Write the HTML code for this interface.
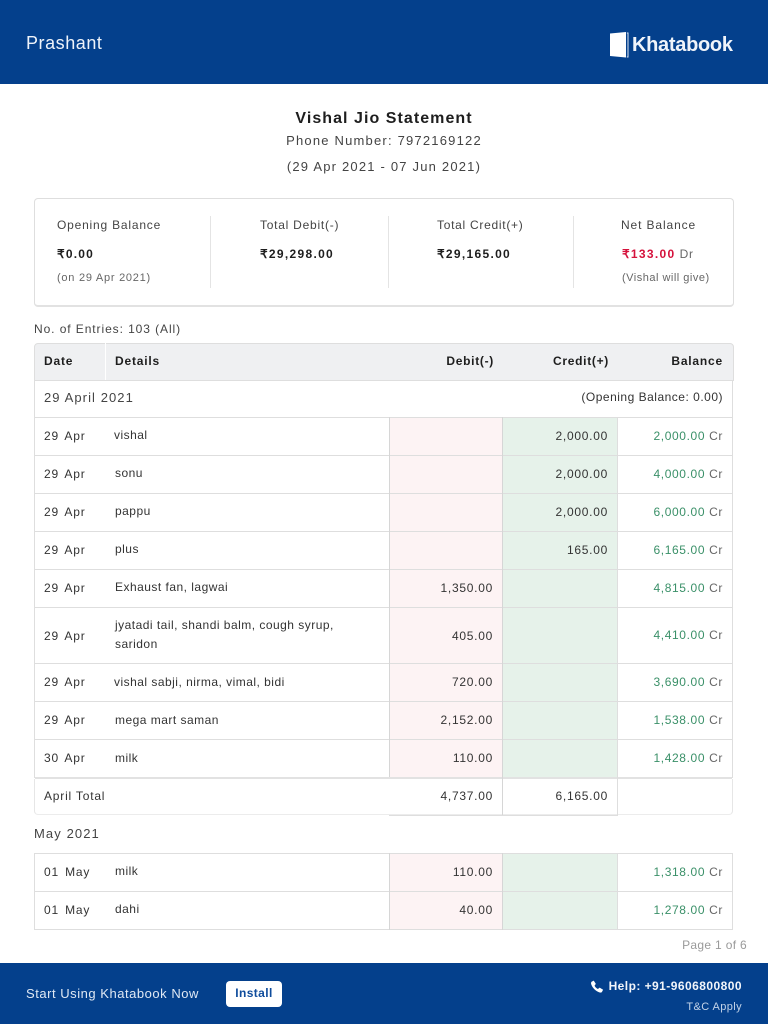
<!DOCTYPE html>
<html><head><meta charset="utf-8">
<style>
html,body{margin:0;padding:0;background:#fff}
#p{position:relative;width:768px;height:1024px;overflow:hidden;background:#fff;font-family:"Liberation Sans",sans-serif;color:#333;font-size:12px;letter-spacing:.8px}
.t,.r,.c{position:absolute;white-space:nowrap;line-height:16px}
.r{text-align:right}
.c{text-align:center}
.b{position:absolute;background:#dedede}
.d{background:#fdf3f4;position:absolute;left:390px;width:112px}
.g{background:#e6f2ea;position:absolute;left:503px;width:114px}
.gn{color:#3a9068}
.gy{color:#666}
.dt{word-spacing:2px;left:44px}
.dl{letter-spacing:.48px}
.n{letter-spacing:.72px}
.bal{letter-spacing:.62px;right:45px}
b{font-weight:700}
.h{font-weight:700;color:#1e1e1e}
</style></head><body><div id="p">

<div style="position:absolute;left:0;top:0;width:768px;height:84px;background:#04408c"></div>
<div class="t" style="left:26px;top:33px;font-size:18px;line-height:20px;color:#eef3fa;letter-spacing:.55px">Prashant</div>
<svg style="position:absolute;left:609px;top:31px" width="22" height="28" viewBox="0 0 22 28"><path d="M1 2.5 L17 1 L17 26.5 L1 25 Z" fill="#fff"/><path d="M17.8 2 H19 V26 H17.8" fill="none" stroke="#dfe8f4" stroke-width="1"/></svg>
<div class="t" style="left:632px;top:32px;font-size:20px;line-height:26px;font-weight:700;color:#f0f4fa;letter-spacing:-.3px">Khatabook</div>

<div class="c" style="left:0;width:768px;top:110px;font-size:16px;line-height:18px;font-weight:700;color:#1e1e1e;letter-spacing:1.05px">Vishal Jio Statement</div>
<div class="c" style="left:0;width:768px;top:133px;font-size:13px;color:#444;letter-spacing:1.2px">Phone Number: 7972169122</div>
<div class="c" style="left:0;width:768px;top:159px;font-size:13px;color:#444;letter-spacing:1.2px">(29 Apr 2021 - 07 Jun 2021)</div>

<div style="position:absolute;left:34px;top:198px;width:698px;height:106px;border:1px solid #dedede;border-bottom:2px solid #e2e2e2;border-radius:4px"></div>
<div class="b" style="left:210px;top:216px;width:1px;height:72px;background:#e4e4e4"></div>
<div class="b" style="left:388px;top:216px;width:1px;height:72px;background:#e4e4e4"></div>
<div class="b" style="left:573px;top:216px;width:1px;height:72px;background:#e4e4e4"></div>

<div class="t" style="left:57px;top:217px;color:#444">Opening Balance</div>
<div class="t" style="left:57px;top:246px;font-weight:700;color:#1e1e1e;letter-spacing:1.2px">₹0.00</div>
<div class="t" style="left:57px;top:270px;font-size:11px;color:#666;letter-spacing:.75px">(on 29 Apr 2021)</div>
<div class="t" style="left:260px;top:217px;color:#444;letter-spacing:.75px">Total Debit(-)</div>
<div class="t" style="left:260px;top:246px;font-weight:700;color:#1e1e1e;letter-spacing:1.3px">₹29,298.00</div>
<div class="t" style="left:437px;top:217px;color:#444;letter-spacing:.72px">Total Credit(+)</div>
<div class="t" style="left:437px;top:246px;font-weight:700;color:#1e1e1e;letter-spacing:1.3px">₹29,165.00</div>
<div class="t" style="left:621px;top:217px;color:#444;letter-spacing:.88px">Net Balance</div>
<div class="t" style="left:622px;top:246px;color:#666"><b style="color:#d5123c;letter-spacing:1.3px">₹133.00</b> Dr</div>
<div class="t" style="left:622px;top:270px;font-size:11px;color:#666;letter-spacing:.5px">(Vishal will give)</div>

<div class="t" style="left:34px;top:321px;color:#444;letter-spacing:.92px">No. of Entries: 103 (All)</div>

<!-- table 1 -->
<div style="position:absolute;left:34px;top:343px;width:698px;height:36px;background:#eff0f2;border:1px solid #dedede;border-radius:4px 4px 0 0"></div>
<div style="position:absolute;left:105px;top:343px;width:1px;height:37px;background:#fff"></div>
<div class="t h" style="left:44px;top:353px">Date</div>
<div class="t h" style="left:115px;top:353px">Details</div>
<div class="r h" style="right:274px;top:353px;letter-spacing:.7px">Debit(-)</div>
<div class="r h" style="right:159px;top:353px;letter-spacing:.7px">Credit(+)</div>
<div class="r h" style="right:45px;top:353px">Balance</div>

<div class="t" style="left:44px;top:390px;font-size:13px;color:#444;letter-spacing:1.08px">29 April 2021</div>
<div class="r" style="right:45px;top:389px;letter-spacing:.5px">(Opening Balance: 0.00)</div>

<!-- fills -->
<div class="d" style="top:418px;height:359px"></div>
<div class="g" style="top:418px;height:359px"></div>

<!-- outer + grid -->
<div class="b" style="left:34px;top:381px;width:1px;height:397px"></div>
<div class="b" style="left:732px;top:381px;width:1px;height:397px"></div>
<div class="b" style="left:35px;top:417px;width:697px;height:1px"></div>
<div class="b" style="left:35px;top:455px;width:697px;height:1px"></div>
<div class="b" style="left:35px;top:493px;width:697px;height:1px"></div>
<div class="b" style="left:35px;top:531px;width:697px;height:1px"></div>
<div class="b" style="left:35px;top:569px;width:697px;height:1px"></div>
<div class="b" style="left:35px;top:607px;width:697px;height:1px"></div>
<div class="b" style="left:35px;top:663px;width:697px;height:1px"></div>
<div class="b" style="left:35px;top:701px;width:697px;height:1px"></div>
<div class="b" style="left:35px;top:739px;width:697px;height:1px"></div>
<div class="b" style="left:35px;top:777px;width:697px;height:2px;background:#e2e2e2"></div>
<!-- total row box -->
<div style="position:absolute;left:34px;top:779px;width:697px;height:35px;border:1px solid #e6e6e6;border-top:0;border-bottom:1px solid #ececec;border-radius:0 0 4px 4px"></div>
<div class="b" style="left:389px;top:815px;width:229px;height:1px"></div>
<div class="b" style="left:389px;top:417px;width:1px;height:360px;background:#d6d6d6"></div>
<div class="b" style="left:502px;top:417px;width:1px;height:398px;background:#d6d6d6"></div>
<div class="b" style="left:617px;top:417px;width:1px;height:398px"></div>

<div class="t dt" style="top:428px">29 Apr</div><div class="t dl" style="left:114px;top:427px">vishal</div>
<div class="r n" style="right:160px;top:428px">2,000.00</div><div class="r gy bal" style="top:428px"><span class="gn">2,000.00</span> Cr</div>
<div class="t dt" style="top:466px">29 Apr</div><div class="t dl" style="left:115px;top:465px">sonu</div>
<div class="r n" style="right:160px;top:466px">2,000.00</div><div class="r gy bal" style="top:466px"><span class="gn">4,000.00</span> Cr</div>
<div class="t dt" style="top:504px">29 Apr</div><div class="t dl" style="left:115px;top:503px">pappu</div>
<div class="r n" style="right:160px;top:504px">2,000.00</div><div class="r gy bal" style="top:504px"><span class="gn">6,000.00</span> Cr</div>
<div class="t dt" style="top:542px">29 Apr</div><div class="t dl" style="left:115px;top:541px">plus</div>
<div class="r n" style="right:160px;top:542px">165.00</div><div class="r gy bal" style="top:542px"><span class="gn">6,165.00</span> Cr</div>
<div class="t dt" style="top:580px">29 Apr</div><div class="t dl" style="left:115px;top:579px">Exhaust fan, lagwai</div>
<div class="r n" style="right:275px;top:580px">1,350.00</div><div class="r gy bal" style="top:580px"><span class="gn">4,815.00</span> Cr</div>
<div class="t dt" style="top:628px">29 Apr</div><div class="t dl" style="left:115px;top:617px">jyatadi tail, shandi balm, cough syrup,</div><div class="t dl" style="left:115px;top:636px">saridon</div>
<div class="r n" style="right:275px;top:628px">405.00</div><div class="r gy bal" style="top:627px"><span class="gn">4,410.00</span> Cr</div>
<div class="t dt" style="top:674px">29 Apr</div><div class="t dl" style="left:114px;top:674px">vishal sabji, nirma, vimal, bidi</div>
<div class="r n" style="right:275px;top:674px">720.00</div><div class="r gy bal" style="top:674px"><span class="gn">3,690.00</span> Cr</div>
<div class="t dt" style="top:712px">29 Apr</div><div class="t dl" style="left:115px;top:712px">mega mart saman</div>
<div class="r n" style="right:275px;top:712px">2,152.00</div><div class="r gy bal" style="top:712px"><span class="gn">1,538.00</span> Cr</div>
<div class="t dt" style="top:750px">30 Apr</div><div class="t dl" style="left:115px;top:750px">milk</div>
<div class="r n" style="right:275px;top:750px">110.00</div><div class="r gy bal" style="top:750px"><span class="gn">1,428.00</span> Cr</div>
<div class="t" style="left:44px;top:788px">April Total</div>
<div class="r n" style="right:275px;top:788px">4,737.00</div><div class="r n" style="right:160px;top:788px">6,165.00</div>

<div class="t" style="left:34px;top:826px;font-size:13px;color:#444;letter-spacing:1.1px">May 2021</div>

<!-- table 2 -->
<div class="d" style="top:854px;height:75px"></div>
<div class="g" style="top:854px;height:75px"></div>
<div class="b" style="left:34px;top:853px;width:699px;height:1px"></div>
<div class="b" style="left:34px;top:891px;width:699px;height:1px"></div>
<div class="b" style="left:34px;top:929px;width:699px;height:1px"></div>
<div class="b" style="left:34px;top:853px;width:1px;height:77px"></div>
<div class="b" style="left:732px;top:853px;width:1px;height:77px"></div>
<div class="b" style="left:389px;top:853px;width:1px;height:77px;background:#d6d6d6"></div>
<div class="b" style="left:502px;top:853px;width:1px;height:77px;background:#d6d6d6"></div>
<div class="b" style="left:617px;top:853px;width:1px;height:77px"></div>
<div class="t dt" style="top:864px">01 May</div><div class="t dl" style="left:115px;top:863px">milk</div>
<div class="r n" style="right:275px;top:864px">110.00</div><div class="r gy bal" style="top:864px"><span class="gn">1,318.00</span> Cr</div>
<div class="t dt" style="top:902px">01 May</div><div class="t dl" style="left:115px;top:901px">dahi</div>
<div class="r n" style="right:275px;top:902px">40.00</div><div class="r gy bal" style="top:902px"><span class="gn">1,278.00</span> Cr</div>

<div class="r" style="right:21px;top:937px;color:#9a9a9a;letter-spacing:.32px">Page 1 of 6</div>

<!-- footer -->
<div style="position:absolute;left:0;top:963px;width:768px;height:61px;background:#04408c"></div>
<div class="t" style="left:26px;top:986px;font-size:13px;color:#dfe8f4;letter-spacing:.53px">Start Using Khatabook Now</div>
<div style="position:absolute;left:226px;top:981px;width:56px;height:26px;background:#fff;border-radius:4px"></div>
<div class="c" style="left:226px;width:56px;top:985px;font-weight:700;color:#0f4c9c;letter-spacing:.4px">Install</div>
<svg style="position:absolute;left:590px;top:979px" width="14" height="15" viewBox="0 0 24 24"><path d="M6.4 2 L10 7.6 L7.8 10.4 C9 13.2 10.8 15 13.6 16.2 L16.5 14 L22.5 17.6 L20.4 21.4 C19.4 22.6 17.8 22.6 16 22 C9.4 19.8 4.2 14.6 2 8 C1.5 6.2 1.7 4.6 3 3.6 Z" fill="#fff"/></svg>
<div class="r" style="right:26px;top:978px;font-weight:700;color:#f2f5fa;letter-spacing:.45px">Help: +91-9606800800</div>
<div class="r" style="right:26px;top:999px;font-size:11px;color:#c3d3e8;letter-spacing:.4px">T&amp;C Apply</div>
</div></body></html>
